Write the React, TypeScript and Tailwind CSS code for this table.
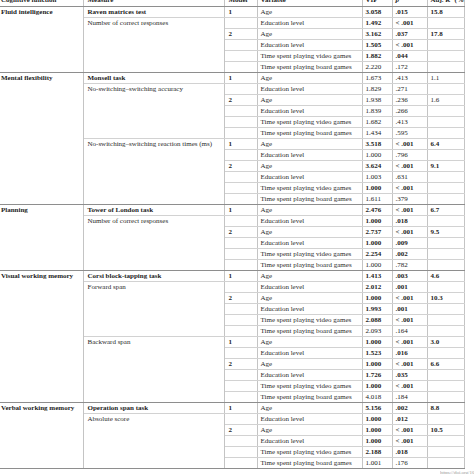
type Row = [string, string, string, boolean];

type Sub = { label: string; rows: Row[] };
type Group = { fn: string; task: string; subs: Sub[] };

const variables = [
  "Age",
  "Education level",
  "Age",
  "Education level",
  "Time spent playing video games",
  "Time spent playing board games",
];
const models = ["1", "", "2", "", "", ""];

const groups: Group[] = [
  {
    fn: "Fluid intelligence",
    task: "Raven matrices test",
    subs: [
      {
        label: "Number of correct responses",
        rows: [
          ["3.058", ".015", "15.8", true],
          ["1.492", "< .001", "", true],
          ["3.162", ".037", "17.8", true],
          ["1.505", "< .001", "", true],
          ["1.882", ".044", "", true],
          ["2.220", ".172", "", false],
        ],
      },
    ],
  },
  {
    fn: "Mental flexibility",
    task: "Monsell task",
    subs: [
      {
        label: "No-switching–switching accuracy",
        rows: [
          ["1.673", ".413", "1.1", false],
          ["1.829", ".271", "", false],
          ["1.938", ".236", "1.6", false],
          ["1.839", ".266", "", false],
          ["1.682", ".413", "", false],
          ["1.434", ".595", "", false],
        ],
      },
      {
        label: "No-switching–switching reaction times (ms)",
        rows: [
          ["3.518", "< .001", "6.4", true],
          ["1.000", ".796", "", false],
          ["3.624", "< .001", "9.1", true],
          ["1.003", ".631", "", false],
          ["1.000", "< .001", "", true],
          ["1.611", ".379", "", false],
        ],
      },
    ],
  },
  {
    fn: "Planning",
    task: "Tower of London task",
    subs: [
      {
        label: "Number of correct responses",
        rows: [
          ["2.476", "< .001", "6.7", true],
          ["1.000", ".018", "", true],
          ["2.737", "< .001", "9.5", true],
          ["1.000", ".009", "", true],
          ["2.254", ".002", "", true],
          ["1.000", ".782", "", false],
        ],
      },
    ],
  },
  {
    fn: "Visual working memory",
    task: "Corsi block-tapping task",
    subs: [
      {
        label: "Forward span",
        rows: [
          ["1.413", ".003", "4.6", true],
          ["2.012", ".001", "", true],
          ["1.000", "< .001", "10.3", true],
          ["1.993", ".001", "", true],
          ["2.088", "< .001", "", true],
          ["2.093", ".164", "", false],
        ],
      },
      {
        label: "Backward span",
        rows: [
          ["1.000", "< .001", "3.0", true],
          ["1.523", ".016", "", true],
          ["1.000", "< .001", "6.6", true],
          ["1.726", ".035", "", true],
          ["1.000", "< .001", "", true],
          ["4.018", ".184", "", false],
        ],
      },
    ],
  },
  {
    fn: "Verbal working memory",
    task: "Operation span task",
    subs: [
      {
        label: "Absolute score",
        rows: [
          ["5.156", ".002", "8.8", true],
          ["1.000", ".012", "", true],
          ["1.000", "< .001", "10.5", true],
          ["1.000", "< .001", "", true],
          ["2.188", ".018", "", true],
          ["1.001", ".176", "", false],
        ],
      },
    ],
  },
];

const cell = "h-[11px] p-0 align-top leading-[10px] border-r border-r-[#c4c4c4] border-b whitespace-nowrap overflow-hidden";
const light = "border-b-[#d2d2d2]";
const dark = "border-b-[#8e8e8e]";

export default function App() {
  return (
    <div className="w-[474px] h-[474px] overflow-hidden bg-white font-['Liberation_Serif',serif] text-[7px] text-[#1c1c1c]">
      <table className="-mt-[5px] w-[464px] table-fixed border-collapse">
        <colgroup>
          <col className="w-[83px]" />
          <col className="w-[141px]" />
          <col className="w-[33px]" />
          <col className="w-[105px]" />
          <col className="w-[30px]" />
          <col className="w-[35px]" />
          <col className="w-[37px]" />
        </colgroup>
        <thead>
          <tr className="font-bold text-left">
            <th className={`${cell} ${dark} pl-px`}>Cognitive function</th>
            <th className={`${cell} ${dark} pl-[4px]`}>Measure</th>
            <th className={`${cell} ${dark} pl-[4px]`}>Model</th>
            <th className={`${cell} ${dark} pl-[3px]`}>Variable</th>
            <th className={`${cell} ${dark} pl-[3px]`}>VIF</th>
            <th className={`${cell} ${dark} pl-[3px] italic`}>p</th>
            <th className={`${cell} ${dark} pl-[3px]`}>
              Adj. R<sup className="text-[5px]">2</sup> (%)
            </th>
          </tr>
        </thead>
        <tbody>
          {groups.map((g) =>
            g.subs.map((s, si) =>
              s.rows.map((r, ri) => {
                const lastSub = si === g.subs.length - 1;
                const edge = lastSub && ri === 5 ? dark : light;
                const bold = r[3] ? "font-bold" : "";
                return (
                  <tr key={`${g.fn}-${si}-${ri}`}>
                    {si === 0 && ri === 0 && (
                      <td rowSpan={6 * g.subs.length} className={`${cell} ${dark} pl-px font-bold`}>
                        {g.fn}
                      </td>
                    )}
                    {si === 0 && ri === 0 && (
                      <td className={`${cell} ${light} pl-[4px] font-bold`}>{g.task}</td>
                    )}
                    {si === 0 && ri === 1 && (
                      <td rowSpan={5} className={`${cell} ${lastSub ? dark : light} pl-[4px] text-[#2a2a2a]`}>
                        {s.label}
                      </td>
                    )}
                    {si > 0 && ri === 0 && (
                      <td rowSpan={6} className={`${cell} ${lastSub ? dark : light} pl-[4px] text-[#2a2a2a]`}>
                        {s.label}
                      </td>
                    )}
                    <td className={`${cell} ${edge} pl-[4px] font-bold`}>{models[ri]}</td>
                    <td className={`${cell} ${edge} pl-[3px] text-[#2a2a2a]`}>{variables[ri]}</td>
                    <td className={`${cell} ${edge} pl-[3px] ${bold}`}>{r[0]}</td>
                    <td className={`${cell} ${edge} pl-[3px] ${bold}`}>{r[1]}</td>
                    <td className={`${cell} ${edge} pl-[3px] ${bold}`}>{r[2]}</td>
                  </tr>
                );
              })
            )
          )}
        </tbody>
      </table>
      <div className="flex justify-end pt-[1px]">
        <span className="w-[34px] overflow-hidden whitespace-nowrap text-[5px] leading-[6px] text-[#9a9a9a]">
          https://doi.org/10.1371/journal
        </span>
      </div>
    </div>
  );
}
